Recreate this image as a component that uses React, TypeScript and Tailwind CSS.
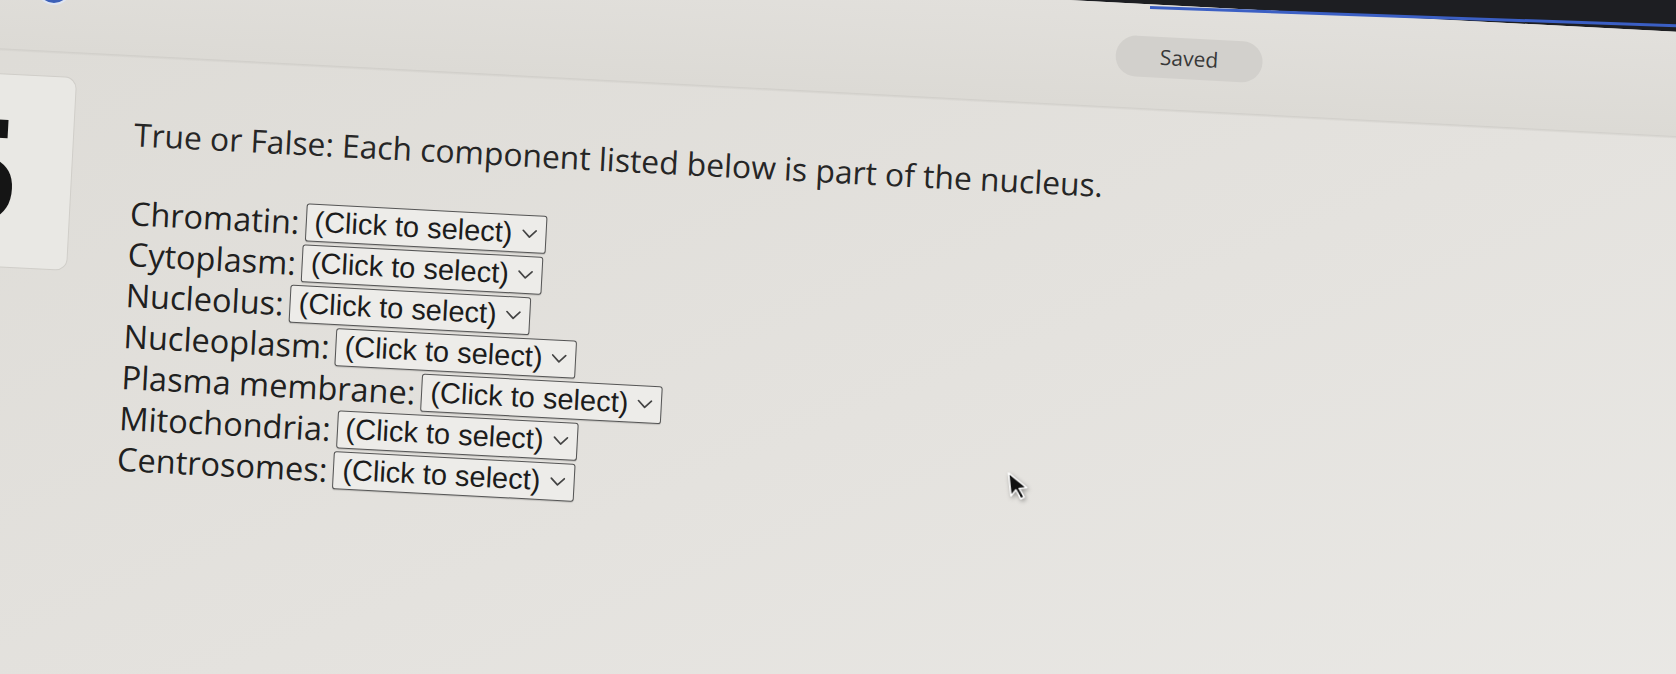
import React from "react";

const items = [
  "Chromatin",
  "Cytoplasm",
  "Nucleolus",
  "Nucleoplasm",
  "Plasma membrane",
  "Mitochondria",
  "Centrosomes",
];

function Chevron() {
  return (
    <svg width="16" height="10" viewBox="0 0 16 10" fill="none" className="shrink-0">
      <path d="M1.5 1.5 L8 8 L14.5 1.5" stroke="#444" strokeWidth="1.7" strokeLinecap="round" strokeLinejoin="round" />
    </svg>
  );
}

function SelectBox() {
  return (
    <div className="flex h-[38px] items-center gap-[9px] rounded-[3px] border border-[#555] bg-[#edece9] pl-[8px] pr-[8px] shadow-[0_1px_1px_rgba(0,0,0,0.15)]">
      <span className="font-['Liberation_Sans',Arial,sans-serif] text-[29px] leading-none text-[#1c1c1c]">
        (Click to select)
      </span>
      <Chevron />
    </div>
  );
}

function Cursor() {
  return (
    <svg width="22" height="32" viewBox="0 0 22 32" className="drop-shadow-[1px_2px_2px_rgba(0,0,0,0.35)]">
      <path
        d="M2 2 L2 25 L7.5 19.5 L11.5 29 L15 27.5 L11 18.5 L18.5 18.5 Z"
        fill="#111"
        stroke="#fff"
        strokeWidth="1.6"
        strokeLinejoin="round"
      />
    </svg>
  );
}

export default function App() {
  return (
    <div className="relative h-[674px] w-[1676px] overflow-hidden bg-[#1d1e22] font-['Open_Sans','Noto_Sans',sans-serif]">
      {/* photographed page, tilted */}
      <div className="absolute left-0 top-[-56px] h-[840px] w-[1800px] origin-top-left rotate-3 bg-linear-to-br from-[#dddbd6] via-[#e4e2de] to-[#ebeae7]">
        <div className="flex h-[104px] items-start bg-linear-to-b from-[#e2e0dc] to-[#dcdad5] pl-[1120px] pt-[32px]">
          <div className="flex h-[41px] w-[147px] items-center justify-center rounded-full bg-[#d2d0cc] text-[21px] text-[#383838]">
            Saved
          </div>
        </div>
        <div className="h-[3px] bg-linear-to-b from-[#cfcdc8] to-transparent" />

        <div className="flex items-start">
          <div className="relative ml-[-20px] mt-[22px] h-[194px] w-[104px] overflow-hidden rounded-[12px] border border-[#d0cec9] bg-[#e9e8e4]">
            <span className="absolute left-[-32px] top-[20px] text-[144px] font-bold leading-none text-[#151515]">
              5
            </span>
          </div>

          <div className="ml-[60px] mt-[58px] flex flex-col">
            <h1 className="text-[31.8px] font-medium leading-[36px] text-[#262626]">
              True or False: Each component listed below is part of the nucleus.
            </h1>
            <div className="mt-[40px] flex flex-col">
              {items.map((name) => (
                <div key={name} className="flex h-[41px] items-center gap-[6px]">
                  <span className="text-[32.5px] font-medium leading-[41px] text-[#202020]">{name}:</span>
                  <SelectBox />
                </div>
              ))}
            </div>
          </div>
        </div>
      </div>

      {/* screen bezel detail */}
      <div className="absolute left-[1150px] top-[6px] h-[3px] w-[560px] origin-left rotate-[2deg] bg-[#3b5fc4]" />
      <div className="absolute left-[36px] top-[-31px] h-9 w-9 rounded-full border-2 border-[#dfe5f2] bg-[#3c60b8]" />

      <div className="absolute left-[1008px] top-[470px] -rotate-6">
        <Cursor />
      </div>
    </div>
  );
}
